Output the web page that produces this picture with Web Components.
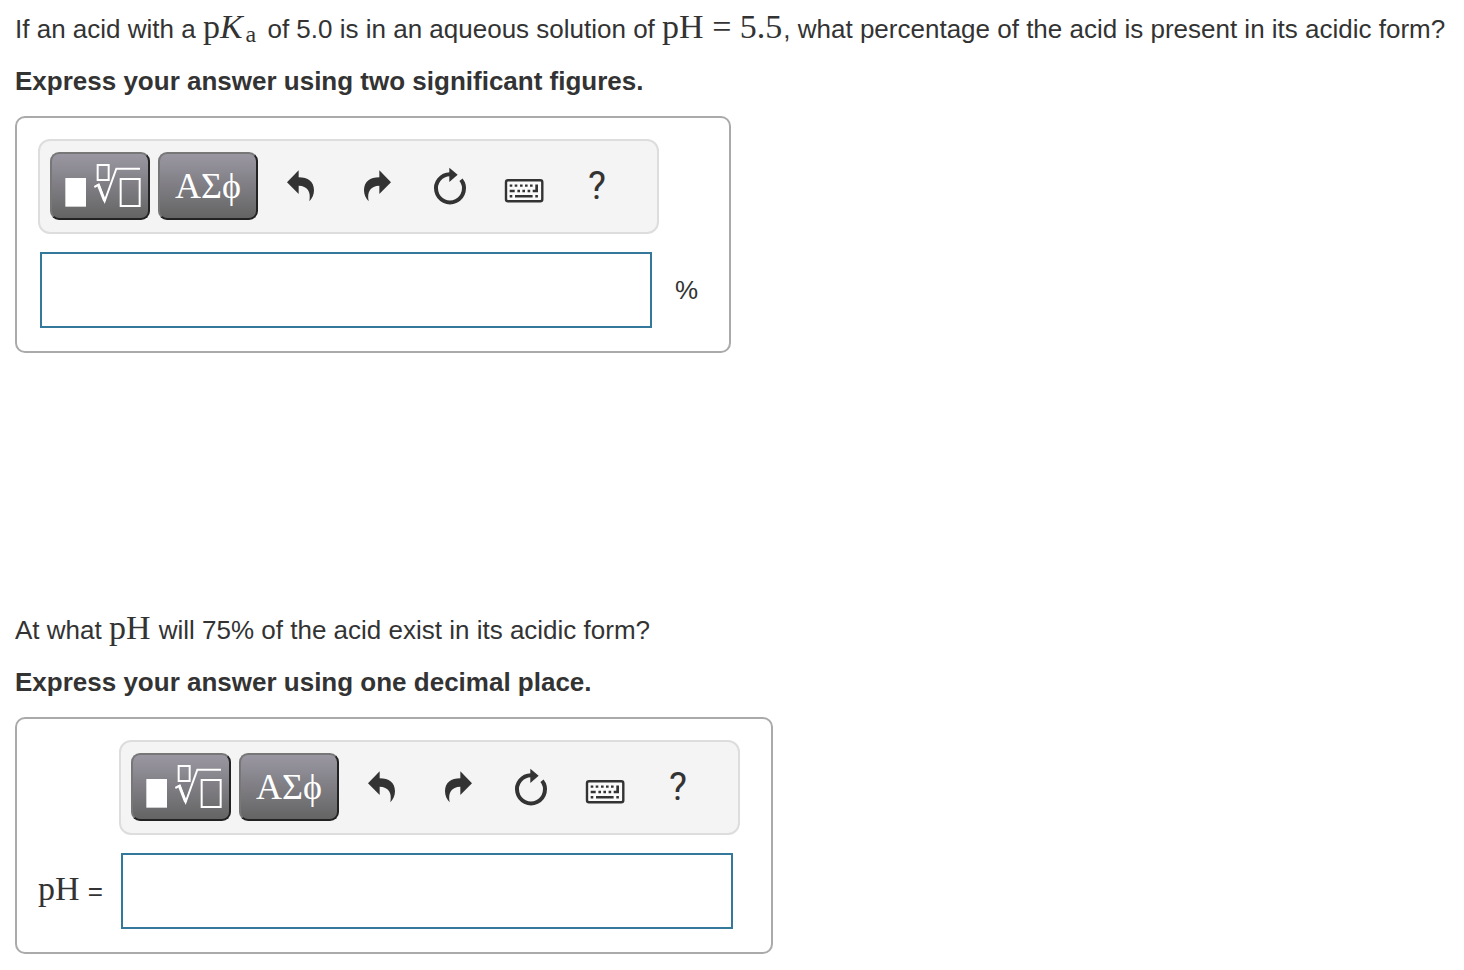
<!DOCTYPE html>
<html lang="en">
<head>
<meta charset="utf-8">
<meta name="viewport" content="width=device-width">
<title>Acid dissociation</title>
<style>
body { margin: 0; background: #fff; color: #333; font: 26px/36px "Liberation Sans", Arial, sans-serif; }
main { display: flex; flex-direction: column; gap: 259px; padding: 11px 15px 16px; }
</style>
</head>
<body>
<main>
  <question-part>
    <span slot="question">If an acid with a <math-text class="wide">p<i>K</i><sub>a</sub></math-text> of 5.0 is in an aqueous solution of <math-text>pH = 5.5</math-text>, what percentage of the acid is present in its acidic form?</span>
    <span slot="hint">Express your answer using two significant figures.</span>
    <answer-box><span slot="unit">%</span></answer-box>
  </question-part>
  <question-part>
    <span slot="question">At what <math-text>pH</math-text> will 75% of the acid exist in its acidic form?</span>
    <span slot="hint">Express your answer using one decimal place.</span>
    <answer-box><span slot="name"><math-text>pH</math-text> =</span></answer-box>
  </question-part>
</main>
<script>
const define = (name, markup) => {
  const template = document.createElement('template');
  template.innerHTML = markup;
  customElements.define(name, class extends HTMLElement {
    constructor() {
      super();
      this.attachShadow({ mode: 'open' }).append(template.content.cloneNode(true));
    }
  });
};

define('math-text', `
<style>
:host { margin: 0 1px 0 0; font: 34px/0 "Liberation Serif", "Times New Roman", serif; }
:host(.wide) { margin-right: 4px; }
::slotted(sub) { margin-left: 3px; font-size: 24px; line-height: 0; vertical-align: -4px; }
</style><slot></slot>`);

define('question-part', `
<style>
:host { display: block; }
p { margin: 0 0 16px; }
.hint { font-weight: bold; margin-bottom: 17px; }
</style>
<p><slot name="question"></slot></p>
<p class="hint"><slot name="hint"></slot></p>
<slot></slot>`);

define('tool-button', `
<style>
:host { display: block; flex: none; }
button { display: flex; align-items: center; justify-content: center; box-sizing: border-box; width: 74px; height: 68px; padding: 0; border: 0; background: none; color: #333; font: 38px/40px Roboto, sans-serif; }
:host(.key) button { width: 100px; color: #fff; border: 2px solid; border-color: #777 #222 #222 #777; border-radius: 9px; background: linear-gradient(#9a97a2, #646464); font: 36px/40px "Liberation Serif", serif; }
</style>
<button type="button"><slot></slot></button>`);

define('math-toolbar', `
<style>
:host { display: flex; box-sizing: border-box; width: 621px; max-width: 100%; padding: 11px 10px 12px; border: 2px solid #ddd; border-radius: 12px; background: #f4f4f4; }
.keys { display: flex; gap: 8px; margin-right: 6px; }
.actions { display: flex; }
svg { display: block; }
</style>
<div class="keys">
  <tool-button class="key"><svg width="96" height="64" viewBox="0 0 96 64" role="img" aria-label="Templates"><g transform="translate(-42 -44) scale(.33333)"><path d="M166 204h62v86h-62z" fill="#fff"/><path d="M263 165h33v45h-33zM332 207h57v81h-57z" fill="none" stroke="#fff" stroke-width="6"/><path d="M253 231l13-7 18 49 35-97h71" fill="none" stroke="#fff" stroke-width="6"/><path d="M264 222l20 51" stroke="#fff" stroke-width="9"/></g></svg></tool-button>
  <tool-button class="key">ΑΣϕ</tool-button>
</div>
<div class="actions">
  <tool-button><svg width="74" height="68" viewBox="0 0 74 68" role="img" aria-label="Undo"><path transform="translate(6 -22) scale(.33333)" fill="#333" d="M51 157L86 121V142C114 142 132 155 132 181C132 195 126 206 118 214C124 184 112 168 86 167V192Z"/></svg></tool-button>
  <tool-button><svg width="74" height="68" viewBox="0 0 74 68" role="img" aria-label="Redo"><path transform="translate(-68 -22) scale(.33333)" fill="#333" d="M363 157L328 121V142C300 142 282 155 282 181C282 195 288 206 296 214C290 184 302 168 328 167V192Z"/></svg></tool-button>
  <tool-button><svg width="74" height="68" viewBox="0 0 74 68" role="img" aria-label="Reset"><g transform="translate(-142 -22) scale(.33333)"><path fill="none" stroke="#333" stroke-width="12" d="M573 149A42 42 0 1 1 540 133"/><path fill="#333" d="M538 113L563 134L538 156Z"/></g></svg></tool-button>
  <tool-button><svg width="74" height="68" viewBox="0 0 74 68" role="img" aria-label="Keyboard shortcuts"><rect x="20" y="28.3" width="36.3" height="21" rx="2" fill="#fafafa" stroke="#333" stroke-width="2.4"/><path fill="#333" d="M23.7 32.6h2.6v2.2h-2.6zM28.7 32.6h2.6v2.2h-2.6zM34 32.6h2.6v2.2h-2.6zM39 32.6h2.6v2.2h-2.6zM44 32.6h2.6v2.2h-2.6zM49.3 32.6h2.7v7.6h-5.3v-2.4h2.6zM23.7 37.8h5v2.4h-5zM31.4 37.8h2.6v2.4h-2.6zM36.4 37.8h2.6v2.4h-2.6zM41.6 37.8h2.6v2.4h-2.6zM23.7 43h2.6v2.4h-2.6zM29 43h17.6v2.4h-17.6zM49.3 43h2.6v2.4h-2.6z"/></svg></tool-button>
  <tool-button>?</tool-button>
</div>`);

define('answer-box', `
<style>
:host { display: grid; grid-template-columns: auto auto auto; align-items: center; row-gap: 18px; box-sizing: border-box; width: fit-content; max-width: 100%; padding: 21px 31px 23px 21px; border: 2px solid #aaa; border-radius: 10px; }
math-toolbar { grid-column: 2; }
label { grid-column: 1; grid-row: 2; }
::slotted([slot="name"]) { margin-right: 16px; }
::slotted([slot="unit"]) { margin-left: 16px; }
input { grid-column: 2; grid-row: 2; box-sizing: border-box; min-width: 0; width: 612px; max-width: 100%; height: 76px; margin: 0 2px; padding: 0 12px; border: 2px solid #34799b; border-radius: 0; background: #fff; color: #333; font: 32px/40px "Liberation Serif", serif; outline: none; }
.unit { grid-column: 3; grid-row: 2; }
</style>
<math-toolbar></math-toolbar>
<label for="answer"><slot name="name"></slot></label>
<input id="answer" type="text" autocomplete="off">
<label class="unit" for="answer"><slot name="unit"></slot></label>`);
</script>
</body>
</html>
